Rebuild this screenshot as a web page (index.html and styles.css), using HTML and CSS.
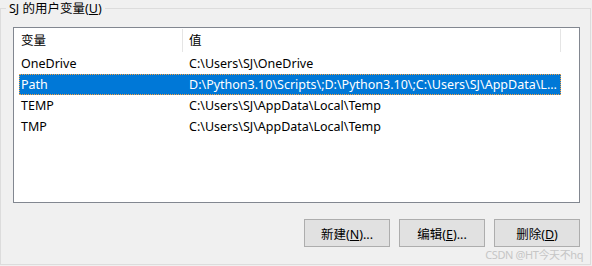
FILE: index.html
```html
<!DOCTYPE html>
<html lang="zh-CN">
<head>
    <meta charset="UTF-8">
    <title>用户变量</title>
    <link rel="stylesheet" href="styles.css">
</head>
<body>
    <fieldset class="var-group">
        <legend class="var-legend">SJ 的用户变量(<u>U</u>)</legend>

        <div class="var-list">
            <div class="list-header">
                <div class="head-cell name-col">变量</div>
                <div class="head-cell value-col">值</div>
            </div>
            <div class="list-row">
                <div class="cell name-col">OneDrive</div>
                <div class="cell value-col">C:\Users\SJ\OneDrive</div>
            </div>
            <div class="list-row selected">
                <div class="cell name-col">Path</div>
                <div class="cell value-col">D:\Python3.10\Scripts\;D:\Python3.10\;C:\Users\SJ\AppData\L...</div>
            </div>
            <div class="list-row">
                <div class="cell name-col">TEMP</div>
                <div class="cell value-col">C:\Users\SJ\AppData\Local\Temp</div>
            </div>
            <div class="list-row">
                <div class="cell name-col">TMP</div>
                <div class="cell value-col">C:\Users\SJ\AppData\Local\Temp</div>
            </div>
        </div>

        <div class="button-row">
            <button class="win-btn">新建(<u>N</u>)...</button>
            <button class="win-btn">编辑(<u>E</u>)...</button>
            <button class="win-btn">删除(<u>D</u>)</button>
        </div>
    </fieldset>

    <div class="watermark">CSDN @HT今天不hq</div>
</body>
</html>
```

FILE: styles.css
```css
:root {
    --bg-window: #f0f0f0;
    --group-border: #dcdcdc;
    --list-border: #828790;
    --header-line: #e5e5e5;
    --select-bg: #0078d7;
    --btn-bg: #e1e1e1;
    --btn-border: #adadad;
}

* { box-sizing: border-box; }

body {
    margin: 0;
    width: 592px;
    height: 266px;
    background: var(--bg-window);
    font-family: "Noto Sans", "Noto Sans CJK SC", sans-serif;
    font-size: 12.5px;
    color: #000;
    position: relative;
    overflow: hidden;
}

.var-group {
    margin: 0;
    width: 591px;
    border: 1px solid var(--group-border);
    padding: 10px 10px 17px 12px;
}

.var-legend {
    margin-left: -7px;
    padding: 0 3px;
    line-height: 17px;
}

.var-list {
    height: 176px;
    background: #fff;
    border: 1px solid var(--list-border);
    overflow: hidden;
}

.list-header {
    display: flex;
    height: 25px;
    padding-left: 5px;
}

.head-cell {
    margin-top: 1px;
    height: 23px;
    line-height: 24px;
    border-right: 1px solid var(--header-line);
}

.list-header .name-col {
    width: 164px;
    padding-left: 2px;
}

.list-header .value-col {
    width: 378px;
    padding-left: 6px;
}

.list-row {
    display: flex;
    width: 542px;
    height: 21px;
    margin-left: 5px;
    line-height: 22px;
}

.list-row.selected {
    background: var(--select-bg);
    color: #fff;
    outline: 1px dotted #f5a142;
    outline-offset: -1px;
}

.cell {
    padding-left: 2px;
    white-space: nowrap;
}

.list-row .name-col { width: 168px; }
.list-row .value-col { flex: 1; }

.button-row {
    display: flex;
    justify-content: flex-end;
    gap: 9px;
    margin-top: 16px;
}

.win-btn {
    width: 86px;
    height: 28px;
    background: var(--btn-bg);
    border: 1px solid var(--btn-border);
    font-family: inherit;
    font-size: 12.5px;
    color: #000;
    padding: 0;
}

.watermark {
    position: absolute;
    right: 9px;
    bottom: 4px;
    font-size: 11px;
    color: #c6c6c6;
    letter-spacing: -0.4px;
}
```
